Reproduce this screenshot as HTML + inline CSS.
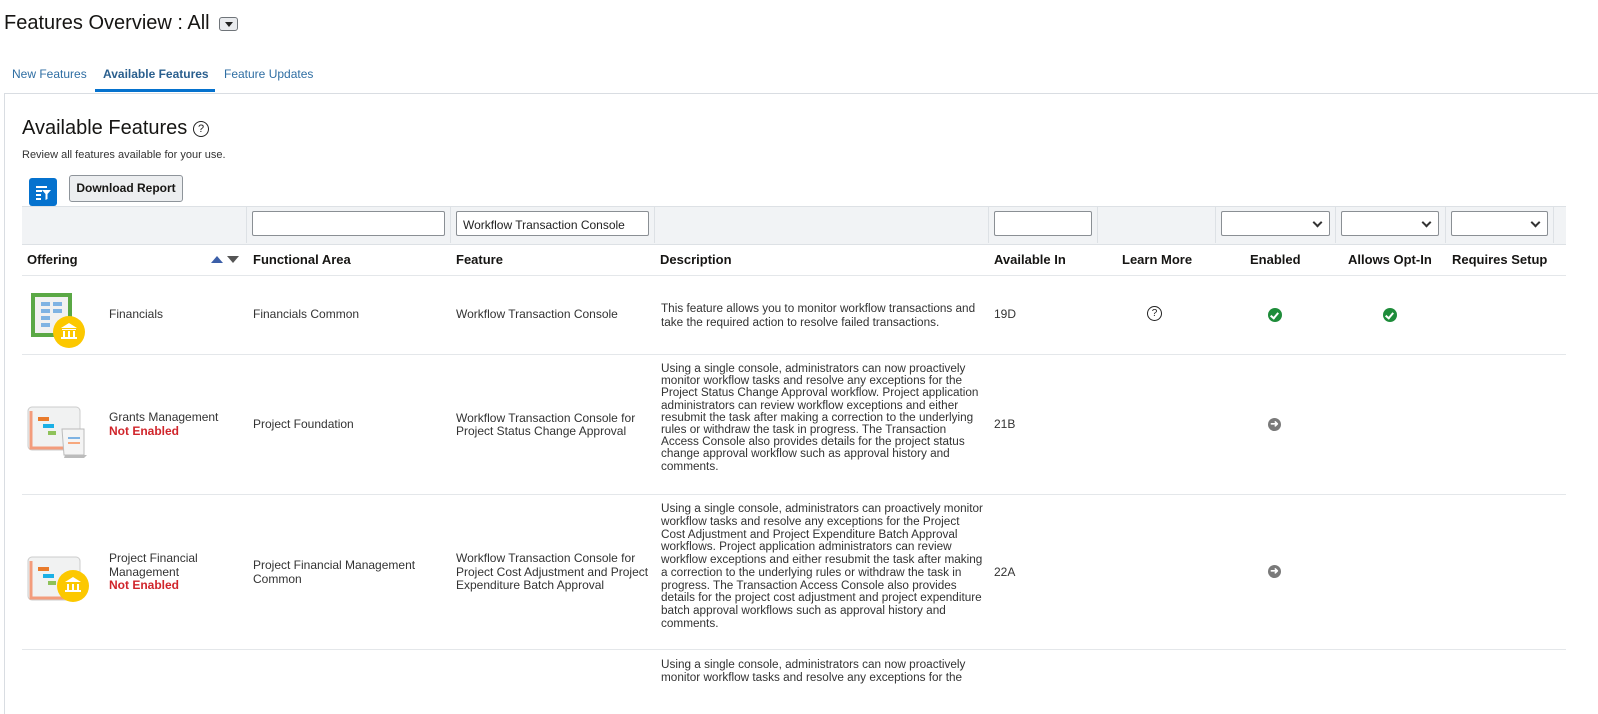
<!DOCTYPE html>
<html><head><style>
body{margin:0;width:1598px;height:700px;overflow:hidden;background:#fff;font-family:"Liberation Sans",Arial,sans-serif;color:#333;position:relative}
.a{position:absolute}
.t{font-size:12px;line-height:12.2px;color:#333;white-space:nowrap}
.d{font-size:11.75px}
.h{font-size:13px;font-weight:bold;color:#161513}
.inp{position:absolute;top:211px;height:25px;border:1px solid #8a8f94;border-radius:2px;background:#fff;box-sizing:border-box;font-size:12px;padding:6px 6px;color:#222}
.sel::after{content:"";position:absolute;right:8px;top:7px;width:5px;height:5px;border-right:2px solid #333;border-bottom:2px solid #333;transform:rotate(45deg)}
.vl{position:absolute;top:206px;height:37px;width:1px;background:#dde1e5}
.hl{position:absolute;left:22px;width:1544px;height:1px;background:#e4e7ea}
.ok{position:absolute;width:14px;height:14px;border-radius:50%;background:#1e8c3a}
.ok::after{content:"";position:absolute;left:4px;top:2.5px;width:3px;height:6px;border-right:2px solid #fff;border-bottom:2px solid #fff;transform:rotate(40deg)}
.go{position:absolute;width:13px;height:13px;border-radius:50%;background:#7a7a7a;color:#fff;font-size:10px;line-height:13px;text-align:center;font-weight:bold}
.red{color:#d0252b}
</style></head><body>
<div class="a" style="left:4px;top:12px;font-size:20px;color:#161513">Features Overview : All</div>
<div class="a" style="left:219px;top:17px;width:17px;height:12px;border:1px solid #6f7479;border-radius:3px;background:#e9ebee"><div style="position:absolute;left:5px;top:4px;border-left:4px solid transparent;border-right:4px solid transparent;border-top:5px solid #222"></div></div>
<div class="a" style="left:12px;top:67px;font-size:12px;color:#2f6ea3">New Features</div>
<div class="a" style="left:103px;top:67px;font-size:12px;color:#2a5f8e;font-weight:bold">Available Features</div>
<div class="a" style="left:224px;top:67px;font-size:12px;color:#2f6ea3">Feature Updates</div>
<div class="a" style="left:95px;top:89px;width:120px;height:3px;background:#0572ce"></div>
<div class="a" style="left:4px;top:93px;width:1594px;height:620px;border-left:1px solid #d9dde2;border-top:1px solid #d9dde2"></div>
<div class="a" style="left:22px;top:117px;font-size:20px;color:#161513">Available Features</div>
<div class="a" style="left:193px;top:121px;width:14px;height:14px;border:1.5px solid #222;border-radius:50%;font-size:11px;line-height:14px;text-align:center;color:#222">?</div>
<div class="a" style="left:22px;top:149px;font-size:11px;color:#333">Review all features available for your use.</div>
<div class="a" style="left:29px;top:178px;width:28px;height:28px;background:#0572ce;border-radius:3px">
<svg width="28" height="28"><g fill="#fff"><rect x="7" y="8" width="11" height="2"/><rect x="7" y="12" width="6" height="2"/><rect x="7" y="16" width="5" height="2"/><rect x="7" y="20" width="5" height="2"/><path d="M13 12h9l-3.5 4v5l-2 1v-6z"/></g></svg></div>
<div class="a" style="left:69px;top:175px;width:114px;height:27px;border:1px solid #8e949a;border-radius:3px;background:#eceef0;box-sizing:border-box;font-size:12px;font-weight:bold;color:#161513;text-align:center;line-height:25px">Download Report</div>
<div class="a" style="left:22px;top:206px;width:1544px;height:37px;background:#f1f3f5;border-top:1px solid #dde1e5;border-bottom:1px solid #dde1e5"></div>
<div class="vl" style="left:246px"></div><div class="vl" style="left:450px"></div><div class="vl" style="left:654px"></div><div class="vl" style="left:988px"></div><div class="vl" style="left:1097px"></div><div class="vl" style="left:1215px"></div><div class="vl" style="left:1335px"></div><div class="vl" style="left:1445px"></div><div class="vl" style="left:1553px"></div>
<div class="inp" style="left:252px;width:193px"></div>
<div class="inp" style="left:456px;width:193px">Workflow Transaction Console</div>
<div class="inp" style="left:994px;width:98px"></div>
<div class="inp sel" style="left:1221px;width:109px"></div>
<div class="inp sel" style="left:1341px;width:98px"></div>
<div class="inp sel" style="left:1451px;width:97px"></div>
<div class="a h" style="left:27px;top:252px">Offering</div>
<div class="a" style="left:211px;top:256px;border-left:6px solid transparent;border-right:6px solid transparent;border-bottom:7px solid #3c5fa8"></div>
<div class="a" style="left:227px;top:256px;border-left:6px solid transparent;border-right:6px solid transparent;border-top:7px solid #555"></div>
<div class="a h" style="left:253px;top:252px">Functional Area</div>
<div class="a h" style="left:456px;top:252px">Feature</div>
<div class="a h" style="left:660px;top:252px">Description</div>
<div class="a h" style="left:994px;top:252px">Available In</div>
<div class="a h" style="left:1122px;top:252px">Learn More</div>
<div class="a h" style="left:1250px;top:252px">Enabled</div>
<div class="a h" style="left:1348px;top:252px">Allows Opt-In</div>
<div class="a h" style="left:1452px;top:252px">Requires Setup</div>
<div class="hl" style="top:275px"></div>
<div class="hl" style="top:354px"></div>
<div class="hl" style="top:494px"></div>
<div class="hl" style="top:649px"></div>
<svg class="a" style="left:28px;top:290px" width="58" height="58"><rect x="5" y="5" width="37" height="40" fill="#f1f1f1" stroke="#5aa845" stroke-width="4"/><g fill="#7fb3e3"><rect x="13" y="12" width="9" height="4"/><rect x="25" y="12" width="9" height="4"/><rect x="13" y="19" width="9" height="4"/><rect x="25" y="19" width="9" height="4"/><rect x="13" y="26" width="9" height="4"/><rect x="13" y="33" width="9" height="4"/></g><circle cx="41" cy="42" r="16" fill="#fcc800"/><path d="M33 38l8-5 8 5zM34 39h14v1H34zM35 41h2v6h-2zM40 41h2v6h-2zM45 41h2v6h-2zM33 47h16v2H33z" fill="#fff"/></svg>
<div class="a t" style="left:109px;top:308px">Financials</div>
<div class="a t" style="left:253px;top:308px">Financials Common</div>
<div class="a t" style="left:456px;top:308px">Workflow Transaction Console</div>
<div class="a t d" style="left:661px;top:302px;line-height:14px">This feature allows you to monitor workflow transactions and<br>take the required action to resolve failed transactions.</div>
<div class="a t" style="left:994px;top:308px">19D</div>
<div class="a" style="left:1147px;top:306px;width:13px;height:13px;border:1.3px solid #222;border-radius:50%;font-size:10px;line-height:13px;text-align:center;color:#222">?</div>
<div class="ok" style="left:1268px;top:308px"></div>
<div class="ok" style="left:1383px;top:308px"></div>
<svg class="a" style="left:26px;top:405px" width="66" height="55"><rect x="2" y="2" width="52" height="43" rx="4" fill="#f1f2f2" stroke="#ccc"/><path d="M5 6v37h34" stroke="#f39c7c" stroke-width="3" fill="none"/><rect x="12" y="12" width="11" height="4" fill="#e97b2b"/><rect x="17" y="19" width="11" height="4" fill="#1bb0e6"/><rect x="22" y="26" width="8" height="4" fill="#8fc25a"/><path d="M36 24h22v26H38z" fill="#f4f4f4" stroke="#bbb"/><rect x="42" y="32" width="12" height="2" fill="#7fb3e3"/><rect x="42" y="37" width="12" height="2" fill="#f7a77c"/><path d="M39 50h22l-3 3H38z" fill="#bbb"/></svg>
<div class="a t" style="left:109px;top:411px">Grants Management</div>
<div class="a t red" style="left:109px;top:425px;font-weight:bold">Not Enabled</div>
<div class="a t" style="left:253px;top:418px">Project Foundation</div>
<div class="a t" style="left:456px;top:412px;line-height:13px">Workflow Transaction Console for<br>Project Status Change Approval</div>
<div class="a t d" style="left:661px;top:363px">Using a single console, administrators can now proactively<br>monitor workflow tasks and resolve any exceptions for the<br>Project Status Change Approval workflow. Project application<br>administrators can review workflow exceptions and either<br>resubmit the task after making a correction to the underlying<br>rules or withdraw the task in progress. The Transaction<br>Access Console also provides details for the project status<br>change approval workflow such as approval history and<br>comments.</div>
<div class="a t" style="left:994px;top:418px">21B</div>
<div class="go" style="left:1268px;top:418px">➜</div>
<svg class="a" style="left:26px;top:555px" width="66" height="50"><rect x="2" y="2" width="52" height="43" rx="4" fill="#f1f2f2" stroke="#ccc"/><path d="M5 6v37h34" stroke="#f39c7c" stroke-width="3" fill="none"/><rect x="12" y="12" width="11" height="4" fill="#e97b2b"/><rect x="17" y="19" width="11" height="4" fill="#1bb0e6"/><rect x="22" y="26" width="8" height="4" fill="#8fc25a"/><circle cx="47" cy="31" r="16" fill="#fcc800"/><path d="M39 27l8-5 8 5zM41 29h2v6h-2zM46 29h2v6h-2zM51 29h2v6h-2zM39 35h16v2H39z" fill="#fff"/></svg>
<div class="a t" style="left:109px;top:552px;line-height:13.5px">Project Financial<br>Management<br><b class="red">Not Enabled</b></div>
<div class="a t" style="left:253px;top:559px;line-height:13.5px">Project Financial Management<br>Common</div>
<div class="a t" style="left:456px;top:552px;line-height:13.5px">Workflow Transaction Console for<br>Project Cost Adjustment and Project<br>Expenditure Batch Approval</div>
<div class="a t d" style="left:661px;top:503px;line-height:12.75px">Using a single console, administrators can proactively monitor<br>workflow tasks and resolve any exceptions for the Project<br>Cost Adjustment and Project Expenditure Batch Approval<br>workflows. Project application administrators can review<br>workflow exceptions and either resubmit the task after making<br>a correction to the underlying rules or withdraw the task in<br>progress. The Transaction Access Console also provides<br>details for the project cost adjustment and project expenditure<br>batch approval workflows such as approval history and<br>comments.</div>
<div class="a t" style="left:994px;top:566px">22A</div>
<div class="go" style="left:1268px;top:565px">➜</div>
<div class="a t d" style="left:661px;top:658px;line-height:13px">Using a single console, administrators can now proactively<br>monitor workflow tasks and resolve any exceptions for the</div>
</body></html>
